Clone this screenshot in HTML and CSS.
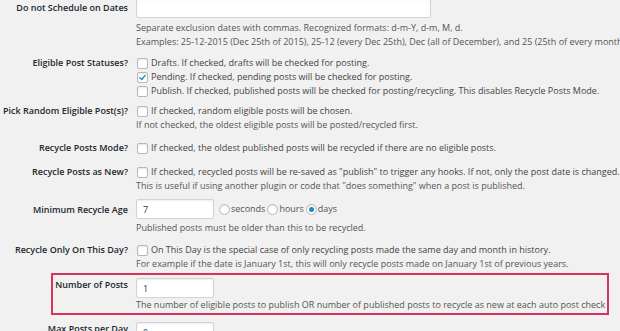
FILE: index.html
```html
<!DOCTYPE html>
<html>
<head>
<meta charset="utf-8">
<link rel="stylesheet" href="styles.css">
</head>
<body>
<div class="form">
  <div class="row r-dates">
    <div class="label lbl-input">Do not Schedule on Dates</div>
    <div class="field">
      <div class="input wide"></div>
      <p class="desc d-after-input">Separate exclusion dates with commas. Recognized formats: d-m-Y, d-m, M, d.<br>Examples: 25-12-2015 (Dec 25th of 2015), 25-12 (every Dec 25th), Dec (all of December), and 25 (25th of every month)</p>
    </div>
  </div>

  <div class="row r-status">
    <div class="label">Eligible Post Statuses?</div>
    <div class="field">
      <div class="check"><span class="box"></span>Drafts. If checked, drafts will be checked for posting.</div>
      <div class="check"><span class="box checked"><svg viewBox="0 0 12 12" width="11" height="11"><path d="M2.6 6.2 L5 8.6 L9.6 3.2" fill="none" stroke="#1e8cbe" stroke-width="1.8" stroke-linecap="round" stroke-linejoin="round"/></svg></span>Pending. If checked, pending posts will be checked for posting.</div>
      <div class="check"><span class="box"></span>Publish. If checked, published posts will be checked for posting/recycling. This disables Recycle Posts Mode.</div>
    </div>
  </div>

  <div class="row r-random">
    <div class="label">Pick Random Eligible Post(s)?</div>
    <div class="field">
      <div class="check"><span class="box"></span>If checked, random eligible posts will be chosen.</div>
      <p class="desc">If not checked, the oldest eligible posts will be posted/recycled first.</p>
    </div>
  </div>

  <div class="row r-mode">
    <div class="label">Recycle Posts Mode?</div>
    <div class="field">
      <div class="check"><span class="box"></span>If checked, the oldest published posts will be recycled if there are no eligible posts.</div>
    </div>
  </div>

  <div class="row r-new">
    <div class="label">Recycle Posts as New?</div>
    <div class="field">
      <div class="check"><span class="box"></span>If checked, recycled posts will be re-saved as "publish" to trigger any hooks. If not, only the post date is changed.</div>
      <p class="desc">This is useful if using another plugin or code that "does something" when a post is published.</p>
    </div>
  </div>

  <div class="row r-age">
    <div class="label lbl-input">Minimum Recycle Age</div>
    <div class="field">
      <div class="inline">
        <div class="input short">7</div>
        <span class="radio"></span><span class="rlabel">seconds</span>
        <span class="radio"></span><span class="rlabel">hours</span>
        <span class="radio on"></span><span class="rlabel">days</span>
      </div>
      <p class="desc d-after-age">Published posts must be older than this to be recycled.</p>
    </div>
  </div>

  <div class="row r-day">
    <div class="label">Recycle Only On This Day?</div>
    <div class="field">
      <div class="check"><span class="box"></span>On This Day is the special case of only recycling posts made the same day and month in history.</div>
      <p class="desc">For example if the date is January 1st, this will only recycle posts made on January 1st of previous years.</p>
    </div>
  </div>

  <div class="row r-number highlight">
    <div class="label lbl-num">Number of Posts</div>
    <div class="field">
      <div class="input short">1</div>
      <p class="desc d-after-num">The number of eligible posts to publish OR number of published posts to recycle as new at each auto post check</p>
    </div>
  </div>

  <div class="row r-max">
    <div class="label lbl-input">Max Posts per Day</div>
    <div class="field">
      <div class="input short">0</div>
    </div>
  </div>
</div>
</body>
</html>
```

FILE: styles.css
```css
html, body {
  margin: 0;
  padding: 0;
  background: #f1f1f1;
  overflow: hidden;
}

body {
  width: 620px;
  height: 331px;
  font-family: "Open Sans", "Noto Sans", sans-serif;
  font-size: 9px;
  line-height: 14px;
  color: #444;
}

.form {
  display: flex;
  flex-direction: column;
}

.row {
  display: grid;
  grid-template-columns: 128px 1fr;
  column-gap: 8px;
  white-space: nowrap;
}

.label {
  text-align: right;
  font-weight: 600;
  color: #23282d;
}

.lbl-input {
  padding-top: 3px;
}

.field {
  min-width: 0;
}

.desc {
  margin: 0;
  color: #555;
}

.input {
  box-sizing: border-box;
  height: 20px;
  background: #fff;
  border: 1px solid #d4d4d4;
  border-radius: 2px;
  box-shadow: inset 0 1px 2px rgba(0, 0, 0, 0.07);
  padding: 0 6px;
  line-height: 19px;
  color: #32373c;
}

.input.wide {
  width: 295px;
}

.input.short {
  width: 78px;
}

.d-after-input {
  margin-top: 3px;
}

.check {
  display: flex;
  align-items: center;
  height: 14px;
}

.box {
  box-sizing: border-box;
  width: 11px;
  height: 11px;
  margin: 0 3px 0 1px;
  border: 1px solid #b4b9be;
  border-radius: 2px;
  background: #fff;
  box-shadow: inset 0 1px 2px rgba(0, 0, 0, 0.1);
  flex: none;
  display: flex;
  align-items: center;
  justify-content: center;
}

.box svg {
  display: block;
}

.r-dates { margin-top: -2px; }
.r-status { margin-top: 7px; }
.r-random { margin-top: 6px; }
.r-mode { margin-top: 9px; }
.r-new { margin-top: 10px; }
.r-age { margin-top: 6px; }
.r-age .lbl-input { padding-top: 4px; }
.r-day { margin-top: 8px; }

.inline {
  display: flex;
  align-items: center;
  height: 20px;
}

.radio {
  box-sizing: border-box;
  width: 11px;
  height: 11px;
  border: 1px solid #b4b9be;
  border-radius: 50%;
  background: #fff;
  box-shadow: inset 0 1px 2px rgba(0, 0, 0, 0.1);
  flex: none;
  position: relative;
}

.inline .input + .radio {
  margin-left: 5px;
}

.radio.on::after {
  content: "";
  position: absolute;
  left: 2px;
  top: 2px;
  width: 5px;
  height: 5px;
  border-radius: 50%;
  background: #1e8cbe;
}

.rlabel {
  margin: 0 2px 0 1px;
  color: #555;
}

.d-after-age {
  margin-top: 2px;
}

.highlight {
  margin-top: 2px;
  margin-left: 51px;
  width: 558px;
  box-sizing: border-box;
  border: 2px solid #d5345c;
  grid-template-columns: 75px 1fr;
  padding-top: 3px;
  height: 42px;
}

.lbl-num {
  padding-top: 0;
}

.d-after-num {
  margin-top: 0;
  line-height: 14px;
}

.r-max {
  margin-top: 7px;
}

.r-max .lbl-input {
  padding-top: 0;
}
```
